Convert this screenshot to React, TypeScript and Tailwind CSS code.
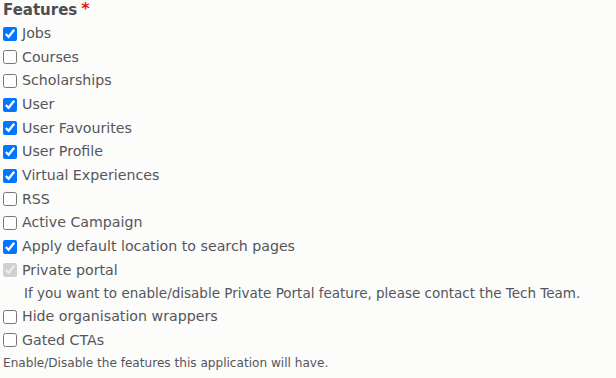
import React from 'react';

const features = [
  { label: 'Jobs', checked: true },
  { label: 'Courses', checked: false },
  { label: 'Scholarships', checked: false },
  { label: 'User', checked: true },
  { label: 'User Favourites', checked: true },
  { label: 'User Profile', checked: true },
  { label: 'Virtual Experiences', checked: true },
  { label: 'RSS', checked: false },
  { label: 'Active Campaign', checked: false },
  { label: 'Apply default location to search pages', checked: true },
  {
    label: 'Private portal',
    checked: true,
    disabled: true,
    description: 'If you want to enable/disable Private Portal feature, please contact the Tech Team.',
  },
  { label: 'Hide organisation wrappers', checked: false },
  { label: 'Gated CTAs', checked: false },
];

export default function App() {
  return (
    <div className="min-h-screen bg-[#fcfcfa] text-[#55565b] font-['DejaVu_Sans',sans-serif]">
      <div className="px-[3px]">
        <div className="flex items-start h-[22px] text-[15px] font-bold text-[#4d4e52] leading-[21px]">
          Features
          <span className="text-[#e4141b] text-[16px] leading-[18px] ml-[4px]">*</span>
        </div>
        {features.map((f) => (
          <div key={f.label}>
            <label className="flex items-center h-[23.67px] gap-[5px] text-[14.2px]">
              <input
                type="checkbox"
                defaultChecked={f.checked}
                disabled={f.disabled}
                className="m-0 w-[14px] h-[14px]"
              />
              <span>{f.label}</span>
            </label>
            {f.description && (
              <div className="h-[22.5px] flex items-center pl-[21px] text-[13.5px]">{f.description}</div>
            )}
          </div>
        ))}
        <div className="h-[22px] flex items-center text-[12.1px]">
          Enable/Disable the features this application will have.
        </div>
      </div>
    </div>
  );
}
